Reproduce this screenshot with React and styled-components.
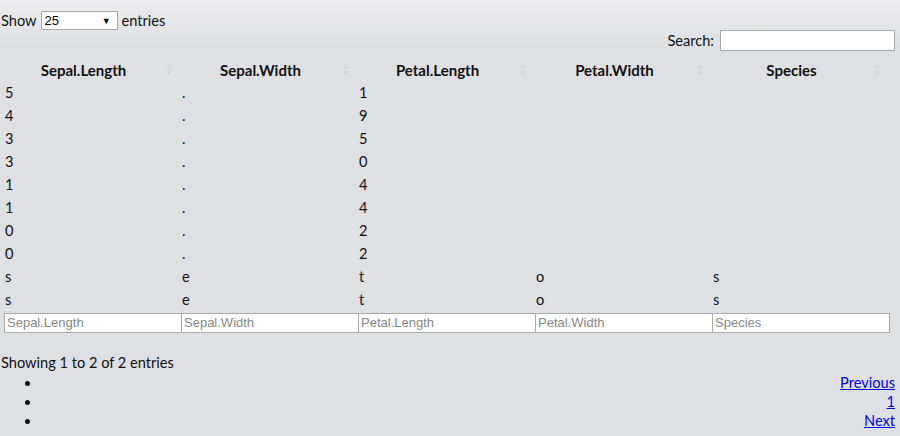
import React from "react";
import styled, { createGlobalStyle } from "styled-components";

const Global = createGlobalStyle`
  html, body { margin: 0; padding: 0; min-height: 100%; }
  body {
    background: linear-gradient(#ececee 0px, #dfe0e4 48px) no-repeat, #dfe0e4;
    min-height: 436px;
    font-family: Lato, "Open Sans", sans-serif;
    font-size: 14.6px;
    color: #111;
  }
`;

const Page = styled.div`
  padding: 11px 5px 0 1px;
`;

const LengthRow = styled.div`
  display: flex;
  align-items: center;
  gap: 4px;
  height: 19px;
`;

const Select = styled.div`
  height: 17px;
  background: #fff;
  border: 1px solid #aaa;
  display: flex;
  align-items: center;
  justify-content: space-between;
  padding: 0 6px 0 3px;
  box-sizing: content-box;
  width: 66px;
  font-family: "Liberation Sans", Arial, sans-serif;
  font-size: 13px;
  color: #000;
`;

const Caret = styled.span`
  font-size: 9px;
`;

const SearchRow = styled.div`
  display: flex;
  justify-content: flex-end;
  align-items: center;
  gap: 6px;
  height: 21px;
`;

const SearchInput = styled.div`
  width: 173px;
  height: 19px;
  background: #fff;
  border: 1px solid #aaa;
`;

const Table = styled.table`
  margin-left: 3px;
  width: 885px;
  table-layout: fixed;
  border-collapse: collapse;
  margin-top: 7px;
`;

const Th = styled.th`
  position: relative;
  height: 23px;
  padding: 0 18px 0 0;
  font-weight: bold;
  font-size: 15px;
  text-align: center;
  vertical-align: middle;
`;

const SortIcon = styled.svg`
  position: absolute;
  right: 8px;
  top: 5px;
`;

const Td = styled.td`
  height: 23px;
  padding: 0 0 0 1px;
  vertical-align: middle;
`;

const FilterTd = styled.td`
  padding: 2px 0 0 0;
`;

const FilterInput = styled.div`
  height: 18px;
  background: #fff;
  border: 1px solid #aaa;
  font-family: "Liberation Sans", Arial, sans-serif;
  font-size: 13px;
  color: #888;
  line-height: 18px;
  padding-left: 2px;
  margin-right: -1px;
`;

const Info = styled.div`
  margin-top: 21px;
  height: 18px;
  line-height: 18px;
`;

const Pager = styled.ul`
  margin: 1px 0 0 0;
  padding-left: 40px;
`;

const PagerItem = styled.li`
  text-align: right;
  height: 19px;
  line-height: 19px;
`;

const PageLink = styled.a`
  color: #00e;
  text-decoration: underline;
  cursor: pointer;
`;

const columns = ["Sepal.Length", "Sepal.Width", "Petal.Length", "Petal.Width", "Species"];
const rows = [
  ["5", ".", "1", "", ""],
  ["4", ".", "9", "", ""],
  ["3", ".", "5", "", ""],
  ["3", ".", "0", "", ""],
  ["1", ".", "4", "", ""],
  ["1", ".", "4", "", ""],
  ["0", ".", "2", "", ""],
  ["0", ".", "2", "", ""],
  ["s", "e", "t", "o", "s"],
  ["s", "e", "t", "o", "s"],
];

const Sort = () => (
  <SortIcon width="8" height="14" viewBox="0 0 8 14">
    <path d="M4 1 L7 6 L1 6 Z" fill="#d7d8dc" />
    <path d="M4 13 L7 8 L1 8 Z" fill="#d7d8dc" />
  </SortIcon>
);

export default function App() {
  return (
    <Page>
      <Global />
      <LengthRow>
        Show
        <Select>
          25<Caret>▼</Caret>
        </Select>
        entries
      </LengthRow>
      <SearchRow>
        Search:
        <SearchInput />
      </SearchRow>
      <Table>
        <thead>
          <tr>
            {columns.map((c) => (
              <Th key={c}>
                {c}
                <Sort />
              </Th>
            ))}
          </tr>
        </thead>
        <tbody>
          {rows.map((r, i) => (
            <tr key={i}>
              {r.map((v, j) => (
                <Td key={j}>{v}</Td>
              ))}
            </tr>
          ))}
        </tbody>
        <tfoot>
          <tr>
            {columns.map((c) => (
              <FilterTd key={c}>
                <FilterInput>{c}</FilterInput>
              </FilterTd>
            ))}
          </tr>
        </tfoot>
      </Table>
      <Info>Showing 1 to 2 of 2 entries</Info>
      <Pager>
        <PagerItem><PageLink>Previous</PageLink></PagerItem>
        <PagerItem><PageLink>1</PageLink></PagerItem>
        <PagerItem><PageLink>Next</PageLink></PagerItem>
      </Pager>
    </Page>
  );
}
